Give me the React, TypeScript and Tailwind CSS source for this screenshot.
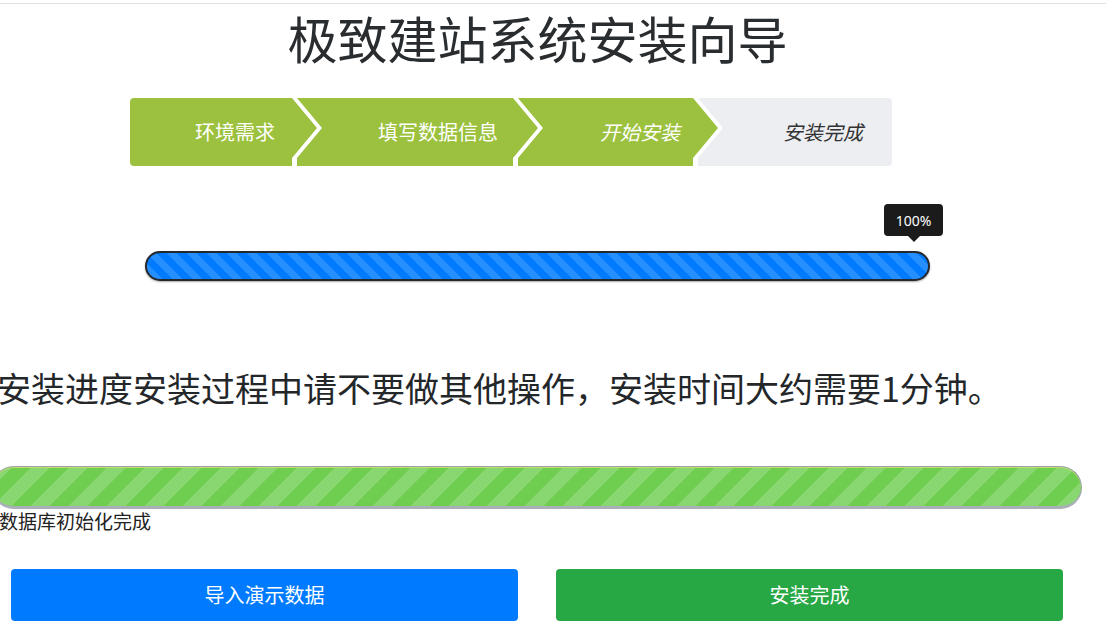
import React from "react";

const font = { fontFamily: '"Noto Sans CJK SC", "Noto Sans", sans-serif' };

export default function App() {
  return (
    <div className="w-[1106px] h-[636px] overflow-hidden bg-white text-[#212529]" style={font}>
      <div className="pt-[3px]">
        <div className="border-t border-[#dee2e6]" />
      </div>
      <h1 className="w-[1075px] mt-[3px] h-[60px] leading-[60px] text-center text-[50px] font-normal text-[#2a2d30]">
        极致建站系统安装向导
      </h1>

      {/* steps */}
      <div className="ml-[130px] mt-[31px] w-[762px] h-[68px] flex rounded-[4px] overflow-hidden text-[20px]">
        <div className="w-[187px] h-full shrink-0 bg-[#9bc13e] text-white flex items-center pl-[65px] [clip-path:polygon(0_0,calc(100%_-_25px)_0,100%_30px,calc(100%_-_25px)_60px,calc(100%_-_25px)_100%,0_100%)]">
          环境需求
        </div>
        <div className="w-[241px] -ml-[20px] h-full shrink-0 bg-[#9bc13e] text-white flex items-center pl-[81px] [clip-path:polygon(0_0,calc(100%_-_25px)_0,100%_30px,calc(100%_-_25px)_60px,calc(100%_-_25px)_100%,0_100%,0_60px,25px_30px)]">
          填写数据信息
        </div>
        <div className="w-[200px] -ml-[20px] h-full shrink-0 bg-[#9bc13e] text-white italic flex items-center pl-[82px] [clip-path:polygon(0_0,calc(100%_-_25px)_0,100%_30px,calc(100%_-_25px)_60px,calc(100%_-_25px)_100%,0_100%,0_60px,25px_30px)]">
          开始安装
        </div>
        <div className="w-[194px] -ml-[20px] h-full shrink-0 bg-[#eceef1] text-[#333] italic flex items-center pl-[85px] [clip-path:polygon(0_0,100%_0,100%_100%,0_100%,0_60px,25px_30px)]">
          安装完成
        </div>
      </div>

      {/* blue progress */}
      <div className="ml-[145px] w-[785px] pt-[85px]">
        <div className="relative h-[30px] rounded-full border-2 border-[#25282c] shadow-[0_1px_2px_rgba(0,0,0,0.35)] bg-[#007bff] [background-image:linear-gradient(45deg,rgba(255,255,255,.15)_25%,transparent_25%,transparent_50%,rgba(255,255,255,.15)_50%,rgba(255,255,255,.15)_75%,transparent_75%,transparent)] [background-size:20px_20px]">
          <div className="absolute left-[737px] bottom-[43px] w-[59px] h-[32px] rounded-[4px] bg-[#1b1b1b] text-white text-[14px] flex items-center justify-center" style={{ fontFamily: '"Noto Sans", "Liberation Sans", sans-serif' }}>
            100%
            <span className="absolute top-full left-1/2 -translate-x-1/2 w-0 h-0 border-x-[6px] border-x-transparent border-t-[6px] border-t-[#1b1b1b]" />
          </div>
        </div>
      </div>

      <div className="-ml-[3px] mt-[82px] h-[50px] leading-[50px] text-[34px] whitespace-nowrap text-[#24272a]">
        安装进度安装过程中请不要做其他操作，安装时间大约需要1分钟。
      </div>

      {/* green progress */}
      <div className="-ml-[8px] mt-[53px] w-[1090px] h-[43px] rounded-full border border-[#9ea3aa] border-b-[3px] border-b-[#aab0b8] bg-[#6fce50] shadow-[inset_0_1px_0_#c2dd6a] [background-image:linear-gradient(135deg,rgba(255,255,255,.18)_25%,transparent_25%,transparent_50%,rgba(255,255,255,.18)_50%,rgba(255,255,255,.18)_75%,transparent_75%,transparent)] [background-size:38px_38px]" />
      <div className="-ml-[1px] h-[24px] leading-[24px] text-[19px] text-[#222]">数据库初始化完成</div>

      {/* buttons */}
      <div className="mt-[36px] pl-[11px] flex gap-[38px]">
        <button className="w-[507px] h-[52px] rounded-[4px] bg-[#007bff] text-white text-[20px]">导入演示数据</button>
        <button className="w-[507px] h-[52px] rounded-[4px] bg-[#28a745] text-white text-[20px]">安装完成</button>
      </div>
    </div>
  );
}
